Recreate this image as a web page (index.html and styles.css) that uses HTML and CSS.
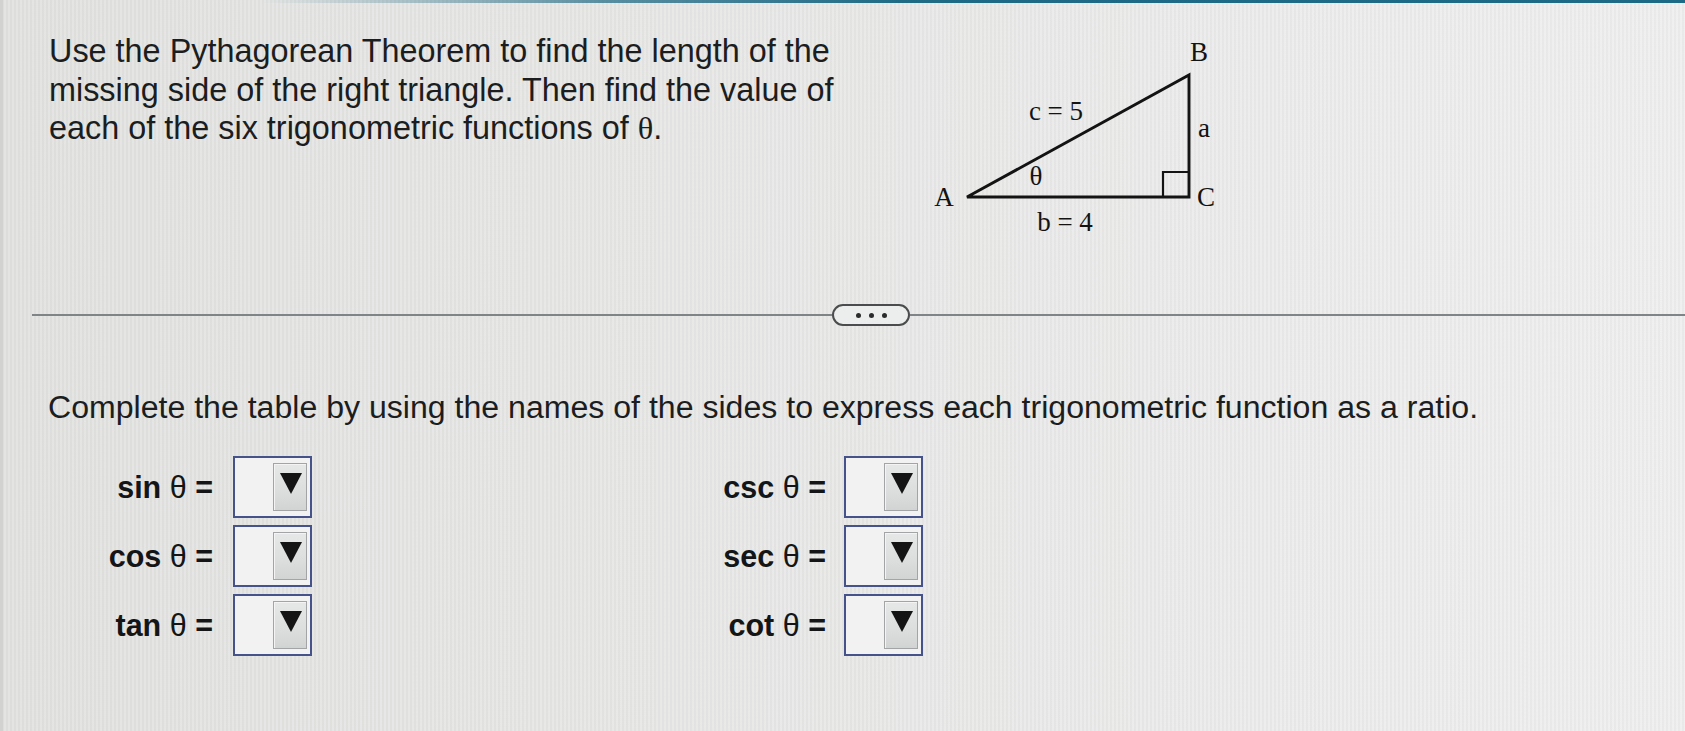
FILE: index.html
```html
<!DOCTYPE html>
<html lang="en">
<head>
<meta charset="utf-8">
<title>Right triangle trigonometry</title>
<link rel="stylesheet" href="styles.css">
</head>
<body>
<div class="screen">
  <div class="topbar"></div>
  <section class="problem">
    <p class="question">Use the Pythagorean Theorem to find the length of the<br>missing side of the right triangle. Then find the value of<br>each of the six trigonometric functions of <span class="theta-serif">θ</span>.</p>
    <svg class="figure" width="310" height="220" viewBox="0 0 310 220" xmlns="http://www.w3.org/2000/svg">
      <polygon points="37,174 259,52 259,174" fill="none" stroke="#131313" stroke-width="2.9" stroke-linejoin="miter"/>
      <polyline points="233,174 233,149 259,149" fill="none" stroke="#131313" stroke-width="2.2"/>
      <g class="fig-text">
        <text x="269" y="38" text-anchor="middle">B</text>
        <text x="126" y="97" text-anchor="middle">c = 5</text>
        <text x="274" y="114" text-anchor="middle">a</text>
        <text x="106" y="162" text-anchor="middle">θ</text>
        <text x="14" y="183" text-anchor="middle">A</text>
        <text x="276" y="183" text-anchor="middle">C</text>
        <text x="135" y="208" text-anchor="middle">b = 4</text>
      </g>
    </svg>
  </section>
  <div class="divider">
    <span class="rule rule-left"></span>
    <span class="more" role="button" aria-label="More"><i></i><i></i><i></i></span>
    <span class="rule rule-right"></span>
  </div>
  <section class="answer">
    <p class="prompt">Complete the table by using the names of the sides to express each trigonometric function as a ratio.</p>
    <div class="table">
      <div class="col">
        <span class="label">sin <span class="th">θ</span> =</span>
        <div class="select"><span class="btn"><span class="tri"></span></span></div>
        <span class="label">cos <span class="th">θ</span> =</span>
        <div class="select"><span class="btn"><span class="tri"></span></span></div>
        <span class="label">tan <span class="th">θ</span> =</span>
        <div class="select"><span class="btn"><span class="tri"></span></span></div>
      </div>
      <div class="col col-right">
        <span class="label">csc <span class="th">θ</span> =</span>
        <div class="select"><span class="btn"><span class="tri"></span></span></div>
        <span class="label">sec <span class="th">θ</span> =</span>
        <div class="select"><span class="btn"><span class="tri"></span></span></div>
        <span class="label">cot <span class="th">θ</span> =</span>
        <div class="select"><span class="btn"><span class="tri"></span></span></div>
      </div>
    </div>
  </section>
</div>
</body>
</html>
```

FILE: styles.css
```css
html, body {
  margin: 0;
  padding: 0;
}

body {
  width: 1685px;
  height: 731px;
  overflow: hidden;
  font-family: "Liberation Sans", Arial, sans-serif;
  color: #1a1b1c;
  background:
    repeating-linear-gradient(90deg, rgba(255,255,255,0.10) 0 2px, rgba(0,0,0,0.018) 2px 4px),
    linear-gradient(90deg, #e1e2e0 0%, #e6e7e5 40%, #eaebea 75%, #edeeed 100%);
  box-shadow: inset 3px 0 0 #d2d3d1;
}

.screen {
  width: 1685px;
  height: 731px;
}

.topbar {
  height: 3px;
  background: linear-gradient(90deg, rgba(30,105,132,0) 0px, rgba(30,105,132,0) 260px, rgba(30,105,132,0.7) 600px, #1f6b86 900px, #1c6a86 100%);
}

.problem {
  display: flex;
  align-items: flex-start;
  margin-top: 20px;
  padding-left: 49px;
}

.question {
  margin: 9px 0 0;
  width: 840px;
  font-size: 32.4px;
  line-height: 38.6px;
  color: #1c1d1e;
}

.theta-serif {
  font-family: "Liberation Serif", "Times New Roman", serif;
}

.figure {
  display: block;
  margin-left: 41px;
}

.fig-text text {
  font-family: "Liberation Serif", "Times New Roman", serif;
  font-size: 27px;
  fill: #131313;
}

.divider {
  display: flex;
  align-items: center;
  margin-top: 61px;
  padding-left: 32px;
  height: 22px;
}

.rule {
  display: block;
  height: 2px;
  background: #818486;
}

.rule-left {
  width: 800px;
}

.rule-right {
  flex: 1;
}

.more {
  box-sizing: border-box;
  width: 78px;
  height: 22px;
  border: 2px solid #4b4c4e;
  border-radius: 11px;
  display: flex;
  align-items: center;
  justify-content: center;
  gap: 8px;
  background: #eceeed;
}

.more i {
  display: block;
  width: 5px;
  height: 5px;
  border-radius: 50%;
  background: #2a2b2c;
}

.answer {
  padding-left: 48px;
}

.prompt {
  margin: 62px 0 0;
  font-size: 32.1px;
  line-height: 38px;
  color: #1c1d1e;
}

.table {
  display: flex;
  margin-top: 30px;
  padding-left: 45px;
}

.col {
  display: grid;
  grid-template-columns: 120px 79px;
  grid-auto-rows: 62px;
  column-gap: 20px;
  row-gap: 7px;
  align-items: center;
}

.col-right {
  margin-left: 394px;
  column-gap: 18px;
}

.label {
  text-align: right;
  font-size: 30.5px;
  font-weight: bold;
  color: #141516;
  white-space: nowrap;
}

.label .th {
  font-weight: normal;
}

.select {
  box-sizing: border-box;
  width: 79px;
  height: 62px;
  border: 2px solid #46538a;
  background: #f1f2f1;
  display: flex;
  justify-content: flex-end;
  align-items: center;
  padding-right: 3px;
}

.btn {
  box-sizing: border-box;
  width: 34px;
  height: 48px;
  border: 1px solid #a3a4a5;
  background: linear-gradient(180deg, #e6e7e7 0%, #dcdddd 60%, #d2d3d3 100%);
  box-shadow: inset 1px 1px 0 #f4f4f4;
  display: flex;
  flex-direction: column;
  align-items: center;
  padding-top: 9px;
}

.tri {
  display: block;
  width: 0;
  height: 0;
  margin-left: 2px;
  border-left: 11px solid transparent;
  border-right: 11px solid transparent;
  border-top: 21px solid #141414;
}
```
